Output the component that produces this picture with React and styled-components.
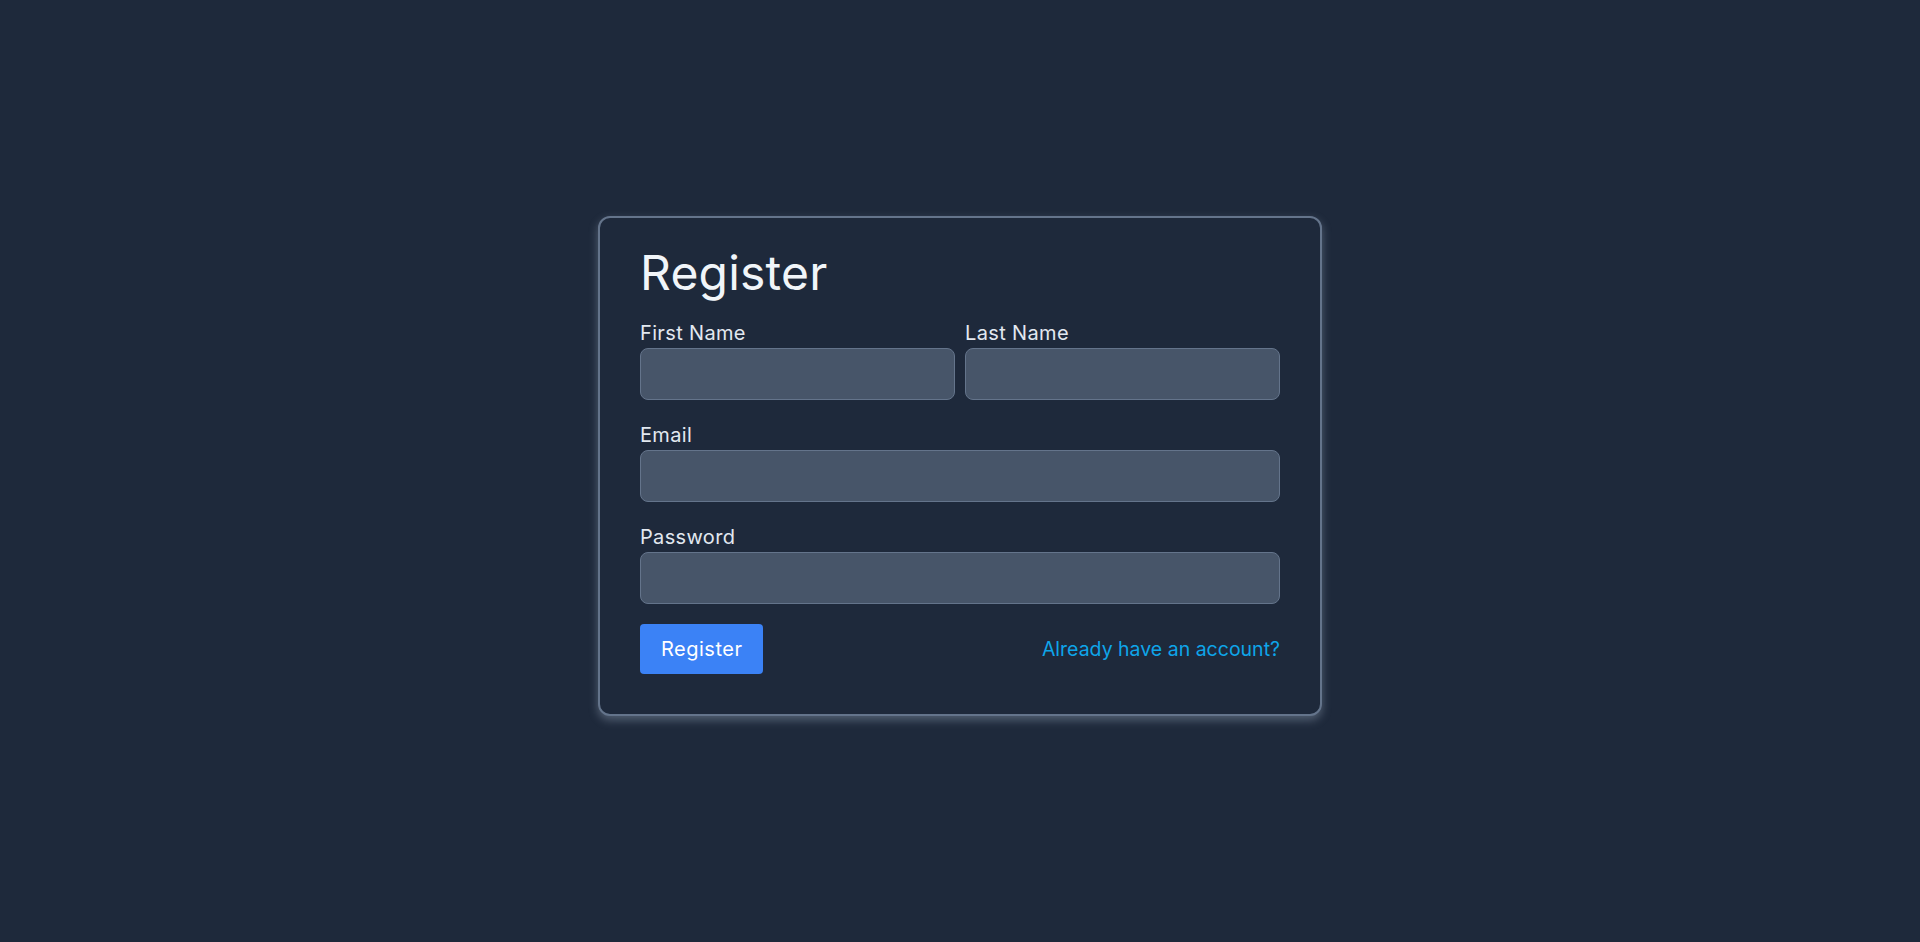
import React from "react";
import styled, { createGlobalStyle } from "styled-components";

const GlobalStyle = createGlobalStyle`
  html, body {
    margin: 0;
    padding: 0;
    background: #1e293b;
  }
  body {
    font-family: Inter, "Noto Sans", "Liberation Sans", sans-serif;
    color: #f1f5f9;
  }
  * { box-sizing: border-box; }
`;

const Page = styled.main`
  min-height: 942px;
  display: flex;
  justify-content: center;
  align-items: flex-start;
  padding-top: 216px;
`;

const Card = styled.form`
  width: 724px;
  border: 2px solid #64748b;
  border-radius: 12px;
  background: #1e293b;
  padding: 31px 40px 40px;
  box-shadow: 0 4px 10px rgba(148, 163, 184, 0.45);
  display: flex;
  flex-direction: column;
`;

const Title = styled.h1`
  margin: 0 0 24px;
  font-size: 48px;
  line-height: 48px;
  font-weight: 400;
  color: #f1f5f9;
  letter-spacing: 0.2px;
`;

const Row = styled.div`
  display: flex;
  gap: 10px;
  margin-bottom: 23px;
`;

const Field = styled.div`
  flex: 1;
  display: flex;
  flex-direction: column;
  min-width: 0;
`;

const Label = styled.label`
  font-size: 20px;
  line-height: 24px;
  letter-spacing: 0.35px;
  color: #e2e8f0;
  margin-bottom: 3px;
`;

const Input = styled.input`
  height: 52px;
  width: 100%;
  border: 1px solid #64748b;
  border-radius: 8px;
  background: #475569;
  color: #f1f5f9;
  font-family: inherit;
  font-size: 18px;
  padding: 0 14px;
  outline: none;
`;

const Footer = styled.div`
  display: flex;
  align-items: center;
  justify-content: space-between;
  margin-top: -3px;
`;

const Button = styled.button`
  height: 50px;
  padding: 0 21px;
  border: none;
  border-radius: 4px;
  background: #3b82f6;
  color: #ffffff;
  font-family: inherit;
  font-size: 20px;
  letter-spacing: 0.5px;
  font-weight: 400;
  cursor: pointer;
`;

const Link = styled.a`
  color: #0ea5e9;
  font-size: 19.5px;
  text-decoration: none;
  cursor: pointer;
`;

export default function App() {
  return (
    <>
      <GlobalStyle />
      <Page>
        <Card onSubmit={(e) => e.preventDefault()}>
          <Title>Register</Title>
          <Row>
            <Field>
              <Label htmlFor="first">First Name</Label>
              <Input id="first" type="text" />
            </Field>
            <Field>
              <Label htmlFor="last">Last Name</Label>
              <Input id="last" type="text" />
            </Field>
          </Row>
          <Row>
            <Field>
              <Label htmlFor="email">Email</Label>
              <Input id="email" type="email" />
            </Field>
          </Row>
          <Row>
            <Field>
              <Label htmlFor="password">Password</Label>
              <Input id="password" type="password" />
            </Field>
          </Row>
          <Footer>
            <Button type="submit">Register</Button>
            <Link href="#">Already have an account?</Link>
          </Footer>
        </Card>
      </Page>
    </>
  );
}
